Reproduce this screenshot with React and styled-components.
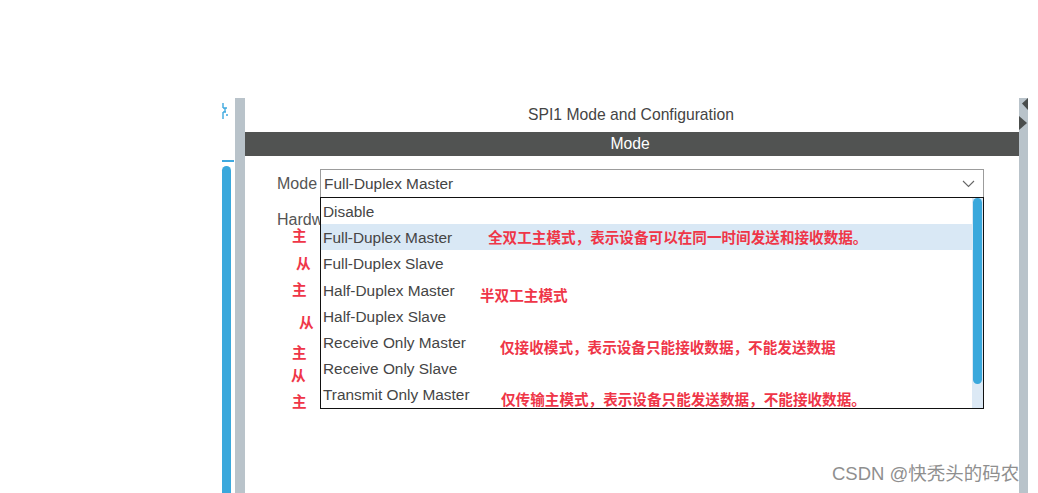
import React from 'react'
import styled, { createGlobalStyle } from 'styled-components'

const GlobalStyle = createGlobalStyle`
  html, body { margin: 0; padding: 0; background: #fff; }
  body { font-family: "Liberation Sans", Arial, sans-serif; }
`

const modes = [
  'Disable',
  'Full-Duplex Master',
  'Full-Duplex Slave',
  'Half-Duplex Master',
  'Half-Duplex Slave',
  'Receive Only Master',
  'Receive Only Slave',
  'Transmit Only Master',
]

// red notes drawn over the screenshot
const marks = [
  { t: '主', x: 292, y: 226 },
  { t: '从', x: 296, y: 254 },
  { t: '主', x: 292, y: 280 },
  { t: '从', x: 299, y: 313 },
  { t: '主', x: 292, y: 343 },
  { t: '从', x: 291, y: 366 },
  { t: '主', x: 292, y: 392 },
]

const notes = [
  { t: '全双工主模式，表示设备可以在同一时间发送和接收数据。', x: 488, y: 228 },
  { t: '半双工主模式', x: 480, y: 286 },
  { t: '仅接收模式，表示设备只能接收数据，不能发送数据', x: 500, y: 338 },
  { t: '仅传输主模式，表示设备只能发送数据，不能接收数据。', x: 501, y: 390 },
]

const App = () => {
  return (
    <>
      <GlobalStyle />
      <Page>
        <LeftSide>
          <TinyIcon viewBox="0 0 6 16">
            <path d="M1 0v5M1 5h4M3 5v4M1 9h3M1 9v7M4 12h2" stroke="#3fa9df" strokeWidth="1.4" fill="none" />
          </TinyIcon>
          <SideLine />
          <SideBar />
        </LeftSide>
        <Divider />
        <Panel>
          <Title>SPI1 Mode and Configuration</Title>
          <Header>Mode</Header>
          <Form>
            <Row>
              <Label>Mode</Label>
              <Select>
                <span>Full-Duplex Master</span>
                <svg width="13" height="8" viewBox="0 0 13 8">
                  <path d="M1 1l5.5 5.5L12 1" stroke="#666" strokeWidth="1.1" fill="none" />
                </svg>
              </Select>
            </Row>
            <Row>
              {/* the rest of the label is hidden under the open list */}
              <Label>Hardw</Label>
            </Row>
          </Form>
          <List>
            <Items>
              {modes.map((m, i) => (
                <Item key={m} $active={i === 1}>{m}</Item>
              ))}
            </Items>
            <Track>
              <Thumb />
            </Track>
          </List>
        </Panel>
        <RightBar>
          <svg width="9" height="36" viewBox="0 0 9 36">
            <path d="M9 0L3 5.5L9 12Z" fill="#4a4d4c" />
            <path d="M0 18L8 25L0 32Z" fill="#4a4d4c" />
          </svg>
        </RightBar>
        {marks.map((m, i) => (
          <Mark key={i} style={{ left: m.x, top: m.y }}>{m.t}</Mark>
        ))}
        {notes.map((n, i) => (
          <Mark key={'n' + i} style={{ left: n.x, top: n.y }}>{n.t}</Mark>
        ))}
        <Watermark>CSDN @快秃头的码农</Watermark>
      </Page>
    </>
  )
}

const Page = styled.div`
  position: relative;
  display: flex;
  width: 1038px;
  height: 493px;
  padding: 98px 0 0 221px;
  box-sizing: border-box;
  overflow: hidden;
  background: #fff;
`

const LeftSide = styled.div`
  width: 14px;
  display: flex;
  flex-direction: column;
  padding-top: 5px;
`

const TinyIcon = styled.svg`
  width: 6px;
  height: 16px;
  margin-left: 1px;
`

const SideLine = styled.div`
  margin-top: 41px;
  width: 12px;
  height: 2px;
  background: #3fa9df;
  margin-left: 1px;
`

const SideBar = styled.div`
  margin-top: 4px;
  margin-left: 1px;
  width: 9px;
  flex: 1;
  background: #3aa8dc;
  border-radius: 5px 5px 0 0;
`

const Divider = styled.div`
  width: 10px;
  background: #b9c3ca;
`

const Panel = styled.div`
  position: relative;
  width: 774px;
  background: #fff;
  display: flex;
  flex-direction: column;
`

const Title = styled.div`
  height: 34px;
  line-height: 34px;
  text-align: center;
  font-size: 15.7px;
  color: #444;
  padding-right: 2px;
`

const Header = styled.div`
  height: 24px;
  line-height: 24px;
  background: #515352;
  color: #fff;
  text-align: center;
  font-size: 15.7px;
  padding-right: 4px;
`

const Form = styled.div`
  padding: 12px 0 0 32px;
  display: flex;
  flex-direction: column;
  gap: 6px;
`

const Row = styled.div`
  display: flex;
  align-items: center;
`

const Label = styled.div`
  width: 43px;
  overflow: hidden;
  white-space: nowrap;
  font-size: 16px;
  color: #555;
  line-height: 29px;
  padding-top: 1px;
`

const Select = styled.div`
  width: 664px;
  height: 29px;
  box-sizing: border-box;
  border: 1px solid #9c9c9c;
  display: flex;
  align-items: center;
  justify-content: space-between;
  padding: 1px 8px 0 3px;
  font-size: 15.4px;
  color: #444;
`

const List = styled.div`
  position: absolute;
  left: 75px;
  top: 99px;
  width: 664px;
  height: 212px;
  box-sizing: border-box;
  border: 1px solid #111;
  background: #fff;
  display: flex;
`

const Items = styled.div`
  flex: 1;
  display: flex;
  flex-direction: column;
`

const Item = styled.div`
  height: 26.2px;
  line-height: 27px;
  padding-left: 2px;
  font-size: 15.4px;
  color: #454545;
  background: ${({ $active }) => ($active ? '#d9e8f5' : 'transparent')};
`

const Track = styled.div`
  width: 11px;
  background: #dce9f5;
  display: flex;
  justify-content: center;
`

const Thumb = styled.div`
  width: 9px;
  height: 186px;
  border-radius: 5px;
  background: #3aa8dc;
`

const RightBar = styled.div`
  width: 9px;
  background: #b9c3ca;
  display: flex;
  flex-direction: column;
`

const Mark = styled.span`
  position: absolute;
  font-family: "Noto Sans CJK SC", sans-serif;
  font-weight: 700;
  font-size: 14.6px;
  line-height: 18px;
  color: #ef3648;
  white-space: nowrap;
`

const Watermark = styled.span`
  position: absolute;
  left: 832px;
  top: 463px;
  font-family: "Liberation Sans", "Noto Sans CJK SC", sans-serif;
  font-size: 18.5px;
  line-height: 22px;
  color: #8f8f8f;
  white-space: nowrap;
`

export default App
